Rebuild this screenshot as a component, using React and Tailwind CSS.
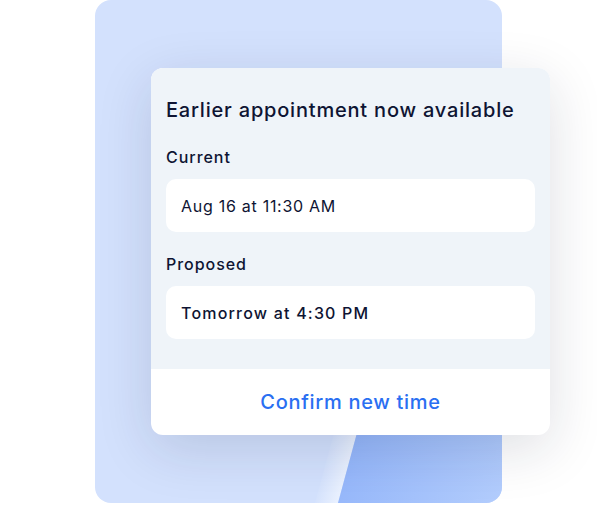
export default function App() {
  return (
    <div className="relative w-[597px] h-[505px] bg-white overflow-hidden font-['Inter',sans-serif] text-[#0e1433]">
      {/* backdrop panel with the blue wedge in its lower right */}
      <div className="relative ml-[95px] w-[407px] h-[503px] rounded-2xl overflow-hidden bg-[#d3e1fd]">
        <div className="absolute inset-0 bg-[linear-gradient(105deg,rgba(235,242,255,0)_65%,rgba(235,242,255,0.9)_69.4%,rgba(235,242,255,0.9)_69.8%)] [clip-path:polygon(220px_503px,275px_300px,298px_300px,243px_503px)]" />
        <div className="absolute inset-0 bg-[linear-gradient(115deg,#80a8f8_58%,#98b9fb_75%,#b3cdfd_100%)] [clip-path:polygon(243px_503px,298px_300px,407px_300px,407px_503px)]" />
      </div>

      {/* card */}
      <div className="absolute left-[151px] top-[68px] w-[399px] rounded-xl overflow-hidden bg-white shadow-[0_14px_55px_rgba(20,30,60,0.14)]">
        <div className="bg-[#eff4f9] px-[15px] pt-[28px] pb-[30px] flex flex-col">
          <h2 className="text-[20px] leading-7 font-medium tracking-[0.04em]">
            Earlier appointment now available
          </h2>
          <p className="mt-[21px] text-[16px] leading-6 font-medium tracking-[0.06em]">
            Current
          </p>
          <div className="mt-[10px] h-[53px] rounded-[10px] bg-white px-[15px] flex items-center text-[16px] tracking-[0.045em]">
            Aug 16 at 11:30 AM
          </div>
          <p className="mt-[20px] text-[16px] leading-6 font-medium tracking-[0.06em]">
            Proposed
          </p>
          <div className="mt-[10px] h-[53px] rounded-[10px] bg-white px-[15px] flex items-center text-[16px] font-medium tracking-[0.075em]">
            Tomorrow at 4:30 PM
          </div>
        </div>
        <div className="h-[66px] flex items-center justify-center">
          <button className="text-[20px] font-medium tracking-[0.035em] text-[#2a6ff2]">Confirm new time</button>
        </div>
      </div>
    </div>
  )
}
